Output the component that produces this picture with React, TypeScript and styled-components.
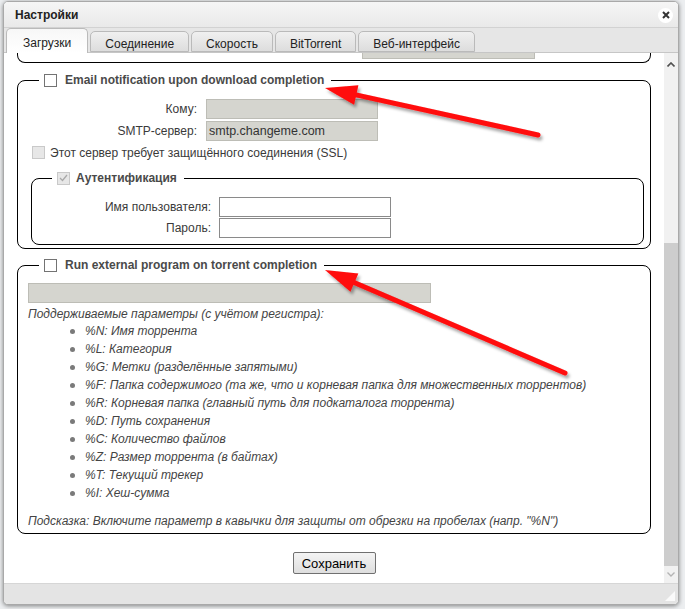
import React from "react";
import styled, { createGlobalStyle } from "styled-components";

const GlobalStyle = createGlobalStyle`
  html, body {
    margin: 0;
    padding: 0;
    background: #eceef0;
    font-family: "Liberation Sans", Arial, sans-serif;
    font-size: 12px;
    color: #333;
  }
`;

const Page = styled.div`
  position: relative;
  width: 685px;
  height: 609px;
  overflow: hidden;
`;

const Window = styled.div`
  margin: 1px 0 0 3px;
  width: 674px;
  height: 602px;
  border: 1px solid #a9a9a9;
  border-radius: 5px;
  background: #fff;
  box-shadow: 0 1px 4px rgba(0, 0, 0, 0.45);
  display: flex;
  flex-direction: column;
  overflow: hidden;
`;

const TitleBar = styled.div`
  height: 25px;
  flex: none;
  display: flex;
  align-items: center;
  justify-content: space-between;
  padding: 0 5px 0 11px;
  background: linear-gradient(#f6f6f6, #e9e9e9);
  border-bottom: 1px solid #d2d2d2;
`;

const Title = styled.span`
  font-weight: bold;
  font-size: 12px;
  color: #222;
`;

const CloseButton = styled.span`
  width: 15px;
  height: 15px;
  border-radius: 50%;
  background: #fff;
  display: flex;
  align-items: center;
  justify-content: center;
  margin-top: 1px;
`;

const TabBar = styled.div`
  height: 24px;
  flex: none;
  display: flex;
  align-items: flex-end;
  gap: 2px;
  padding-left: 2px;
  background: #e6e6e6;
  border-bottom: 1px solid #c6c6c6;
`;

const Tab = styled.div<{ $active?: boolean }>`
  box-sizing: border-box;
  height: ${(p) => (p.$active ? "25px" : "21px")};
  margin-bottom: ${(p) => (p.$active ? "-1px" : "0")};
  padding: ${(p) => (p.$active ? "6px 16px 0" : "4px 14px 0")};
  line-height: 16px;
  font-size: 12px;
  color: #222;
  border: 1px solid #bababa;
  border-bottom: ${(p) => (p.$active ? "none" : "1px solid #bababa")};
  border-radius: 5px 5px 0 0;
  background: ${(p) =>
    p.$active
      ? "linear-gradient(#f7f7f7, #ffffff)"
      : "linear-gradient(#f0f0f0, #dddddd)"};
`;

const Body = styled.div`
  height: 530px;
  flex: none;
  display: flex;
`;

const Content = styled.div`
  flex: 1;
  overflow: hidden;
  padding: 0 13px;
  background: #fff;
`;

const Fragment = styled.div`
  height: 9px;
  border: 1px solid #000;
  border-top: none;
  border-radius: 0 0 8px 8px;
`;

const FragmentInput = styled.div`
  margin-left: 344px;
  width: 171px;
  height: 5px;
  background: #d5d5cf;
  border: 1px solid #bdbdb6;
  border-top: none;
`;

const Fieldset = styled.fieldset<{ $top: number; $pad: string }>`
  margin: ${(p) => p.$top}px 0 0 0;
  padding: ${(p) => p.$pad};
  border: 1px solid #000;
  border-radius: 8px;
  min-width: 0;
`;

const InnerFieldset = styled(Fieldset)`
  margin-left: 3px;
`;

const Legend = styled.legend<{ $gap: number }>`
  margin-left: ${(p) => (p.$gap === 8 ? 11 : 10)}px;
  padding: 0 7px 0 5px;
  height: 14px;
  display: flex;
  align-items: center;
  gap: ${(p) => p.$gap}px;
  font-weight: bold;
  font-size: 12px;
  line-height: 14px;
  color: #4a4a4a;
`;

const Box = styled.span<{ $disabled?: boolean }>`
  box-sizing: border-box;
  width: 13px;
  height: 13px;
  flex: none;
  border: 1px solid ${(p) => (p.$disabled ? "#c9c9c9" : "#737373")};
  background: ${(p) => (p.$disabled ? "#e7e7e7" : "#fff")};
  display: flex;
  align-items: center;
  justify-content: center;
`;

const FormGrid = styled.div<{ $gap: number }>`
  display: grid;
  grid-template-columns: 169px 172px;
  column-gap: ${(p) => p.$gap}px;
  row-gap: ${(p) => (p.$gap === 9 ? 2 : 1)}px;
`;

const Label = styled.label`
  text-align: right;
  line-height: 20px;
  color: #3a3a3a;
`;

const Field = styled.div<{ $disabled?: boolean; $width?: number }>`
  box-sizing: border-box;
  height: 20px;
  width: ${(p) => (p.$width ? `${p.$width}px` : "auto")};
  padding-left: 2px;
  line-height: 18px;
  font-size: 12.5px;
  color: #333;
  background: ${(p) => (p.$disabled ? "#d5d5cf" : "#fff")};
  border: 1px solid ${(p) => (p.$disabled ? "#bdbdb6" : "#8a8a8a")};
`;

const CheckRow = styled.div`
  margin-top: 5px;
  padding-left: 4px;
  height: 13px;
  display: flex;
  align-items: center;
  gap: 5px;
  color: #3a3a3a;
  line-height: 14px;
`;

const Note = styled.div<{ $top: number }>`
  margin-top: ${(p) => p.$top}px;
  line-height: ${(p) => (p.$top === 3 ? 16 : 18)}px;
  font-style: italic;
  color: #444;
`;

const ParamList = styled.ul`
  margin: 0;
  padding: 0 0 0 42px;
  list-style: none;
`;

const ParamItem = styled.li`
  height: 18px;
  display: flex;
  align-items: center;
  font-style: italic;
  color: #444;

  &::before {
    content: "";
    width: 5px;
    height: 5px;
    border-radius: 50%;
    background: #7a7a7a;
    margin-right: 10px;
    flex: none;
  }
`;

const ButtonRow = styled.div`
  margin-top: 18px;
  display: flex;
  justify-content: center;
`;

const SaveButton = styled.button`
  box-sizing: border-box;
  width: 83px;
  height: 22px;
  padding: 0;
  font-family: "Liberation Sans", Arial, sans-serif;
  font-size: 13px;
  color: #000;
  background: linear-gradient(#f4f4f4, #dedede);
  border: 1px solid #707070;
  border-radius: 2px;
`;

const ScrollBar = styled.div`
  width: 14px;
  flex: none;
  display: flex;
  flex-direction: column;
  background: #f1f1f1;
`;

const ScrollButton = styled.div<{ $h: number }>`
  height: ${(p) => p.$h}px;
  flex: none;
  display: flex;
  align-items: center;
  justify-content: center;
`;

const ScrollGap = styled.div`
  flex: 1;
`;

const Thumb = styled.div`
  height: 323px;
  flex: none;
  background: #cdcdcd;
`;

const Footer = styled.div`
  flex: 1;
  background: #e4e4e4;
  border-top: 1px solid #d6d6d6;
  display: flex;
  justify-content: flex-end;
  align-items: flex-end;
  padding: 0 3px 3px 0;
`;

const Overlay = styled.svg`
  position: absolute;
  left: 0;
  top: 0;
  pointer-events: none;
`;

const tabs = ["Загрузки", "Соединение", "Скорость", "BitTorrent", "Веб-интерфейс"];

const params = [
  "%N: Имя торрента",
  "%L: Категория",
  "%G: Метки (разделённые запятыми)",
  "%F: Папка содержимого (та же, что и корневая папка для множественных торрентов)",
  "%R: Корневая папка (главный путь для подкаталога торрента)",
  "%D: Путь сохранения",
  "%C: Количество файлов",
  "%Z: Размер торрента (в байтах)",
  "%T: Текущий трекер",
  "%I: Хеш-сумма",
];

const Check = () => (
  <svg width="9" height="8" viewBox="0 0 9 8">
    <polyline points="1,4 3.5,6.5 8,1" fill="none" stroke="#a9a9a9" strokeWidth="1.3" />
  </svg>
);

type ArrowProps = { tip: [number, number]; tail: [number, number] };

const Arrow = ({ tip, tail }: ArrowProps) => {
  const dx = tail[0] - tip[0];
  const dy = tail[1] - tip[1];
  const len = Math.hypot(dx, dy);
  const ux = dx / len;
  const uy = dy / len;
  const px = -uy;
  const py = ux;
  const bx = tip[0] + ux * 32;
  const by = tip[1] + uy * 32;
  const head = `${tip[0]},${tip[1]} ${bx + px * 10},${by + py * 10} ${bx - px * 10},${by - py * 10}`;
  return (
    <g filter="url(#shadow)">
      <line
        x1={tip[0] + ux * 26}
        y1={tip[1] + uy * 26}
        x2={tail[0]}
        y2={tail[1]}
        stroke="#ff0a0a"
        strokeWidth="5"
        strokeLinecap="round"
      />
      <polygon points={head} fill="#ff0a0a" />
    </g>
  );
};

export default function App() {
  return (
    <Page>
      <GlobalStyle />
      <Window>
        <TitleBar>
          <Title>Настройки</Title>
          <CloseButton>
            <svg width="8" height="8" viewBox="0 0 8 8">
              <path d="M1 1L7 7M7 1L1 7" stroke="#333" strokeWidth="2" />
            </svg>
          </CloseButton>
        </TitleBar>
        <TabBar>
          {tabs.map((t, i) => (
            <Tab key={t} $active={i === 0}>
              {t}
            </Tab>
          ))}
        </TabBar>
        <Body>
          <Content>
            <Fragment>
              <FragmentInput />
            </Fragment>

            <Fieldset $top={10} $pad="12px 6px 3px 10px">
              <Legend $gap={8}>
                <Box />
                Email notification upon download completion
              </Legend>
              <FormGrid $gap={9}>
                <Label>Кому:</Label>
                <Field $disabled />
                <Label>SMTP-сервер:</Label>
                <Field $disabled>smtp.changeme.com</Field>
              </FormGrid>
              <CheckRow>
                <Box $disabled />
                Этот сервер требует защищённого соединения (SSL)
              </CheckRow>
              <InnerFieldset $top={12} $pad="12px 6px 6px 10px">
                <Legend $gap={6}>
                  <Box $disabled>
                    <Check />
                  </Box>
                  Аутентификация
                </Legend>
                <FormGrid $gap={8}>
                  <Label>Имя пользователя:</Label>
                  <Field />
                  <Label>Пароль:</Label>
                  <Field />
                </FormGrid>
              </InnerFieldset>
            </Fieldset>

            <Fieldset $top={9} $pad="11px 6px 3px 10px">
              <Legend $gap={8}>
                <Box />
                Run external program on torrent completion
              </Legend>
              <Field $disabled $width={403} />
              <Note $top={3}>Поддерживаемые параметры (с учётом регистра):</Note>
              <ParamList>
                {params.map((p) => (
                  <ParamItem key={p}>{p}</ParamItem>
                ))}
              </ParamList>
              <Note $top={10}>
                Подсказка: Включите параметр в кавычки для защиты от обрезки на пробелах (напр. "%N")
              </Note>
            </Fieldset>

            <ButtonRow>
              <SaveButton>Сохранить</SaveButton>
            </ButtonRow>
          </Content>
          <ScrollBar>
            <ScrollButton $h={22}>
              <svg width="8" height="5" viewBox="0 0 8 5">
                <polyline points="0.5,4.5 4,1 7.5,4.5" fill="none" stroke="#505050" strokeWidth="1.6" />
              </svg>
            </ScrollButton>
            <ScrollGap />
            <Thumb />
            <ScrollButton $h={17}>
              <svg width="8" height="5" viewBox="0 0 8 5">
                <polyline points="0.5,0.5 4,4 7.5,0.5" fill="none" stroke="#b4b4b4" strokeWidth="1.4" />
              </svg>
            </ScrollButton>
          </ScrollBar>
        </Body>
        <Footer>
          <svg width="10" height="10" viewBox="0 0 10 10">
            <polygon points="10,0 10,10 0,10" fill="#fafafa" />
          </svg>
        </Footer>
      </Window>
      <Overlay width="685" height="609" viewBox="0 0 685 609">
        <defs>
          <filter id="shadow" x="-20%" y="-20%" width="140%" height="160%">
            <feDropShadow dx="2" dy="3" stdDeviation="1.8" floodColor="#000" floodOpacity="0.35" />
          </filter>
        </defs>
        <Arrow tip={[325, 88]} tail={[538, 135]} />
        <Arrow tip={[325, 270]} tail={[565, 373]} />
      </Overlay>
    </Page>
  );
}
